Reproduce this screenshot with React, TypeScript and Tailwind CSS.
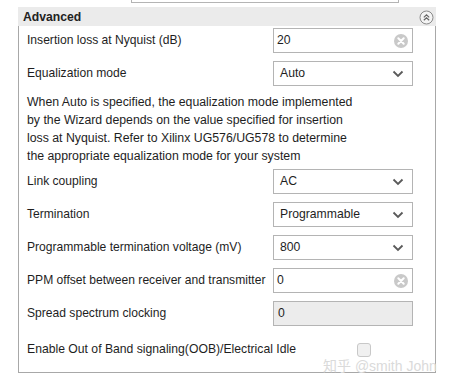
import React from "react";

const font = { fontFamily: '"Liberation Sans", Arial, sans-serif' };

function ClearIcon() {
  return (
    <svg width="14" height="14" viewBox="0 0 14 14" className="shrink-0">
      <circle cx="7" cy="7" r="7" fill="#c9c9c9" />
      <path d="M4.3 4.3 L9.7 9.7 M9.7 4.3 L4.3 9.7" stroke="#fff" strokeWidth="2" strokeLinecap="round" />
    </svg>
  );
}

function Chevron() {
  return (
    <svg width="12" height="8" viewBox="0 0 12 8" className="shrink-0">
      <path d="M1.5 1.5 L6 6 L10.5 1.5" fill="none" stroke="#5a5a5a" strokeWidth="1.8" />
    </svg>
  );
}

function CollapseIcon() {
  return (
    <svg width="15" height="15" viewBox="0 0 15 15">
      <circle cx="7.5" cy="7.5" r="6.5" fill="#f4f4f4" stroke="#8a8a8a" strokeWidth="1" />
      <path d="M4.8 7.4 L7.5 4.9 L10.2 7.4 M4.8 10.2 L7.5 7.7 L10.2 10.2" fill="none" stroke="#666" strokeWidth="1.2" />
    </svg>
  );
}

function Row({ label, children }: { label: string; children: React.ReactNode }) {
  return (
    <div className="flex h-[25px] items-center">
      <div className="w-[254px] whitespace-nowrap pl-[8px] text-[12.1px] text-[#1e1e1e]">{label}</div>
      {children}
    </div>
  );
}

function TextInput({ value }: { value: string }) {
  return (
    <div className="flex h-[25px] w-[140px] items-center justify-between border border-[#b4b4b4] bg-white pl-[3px] pr-[4px] text-[12.2px] text-[#1e1e1e]">
      <span>{value}</span>
      <ClearIcon />
    </div>
  );
}

function Select({ value }: { value: string }) {
  return (
    <div className="flex h-[25px] w-[140px] items-center justify-between border border-[#b4b4b4] bg-white pl-[6px] pr-[8px] text-[12.2px] text-[#1e1e1e]">
      <span>{value}</span>
      <Chevron />
    </div>
  );
}

export default function App() {
  return (
    <div className="relative h-[387px] w-[449px] overflow-hidden bg-white" style={font}>
      <div className="ml-[131px] h-[3px] w-[268px] border-x border-b border-[#b4b4b4]" />
      <div className="ml-[18px] mt-[4px] w-[418px]">
        <div className="flex h-[19px] items-center justify-between bg-[#ebebeb] pl-[5px] pr-[2px] pt-[1px]">
          <span className="text-[12.2px] font-bold text-[#222]">Advanced</span>
          <CollapseIcon />
        </div>
        <div className="flex flex-col border-x border-b border-[#a8a8a8] pb-[10px] pt-[2px]">
          <Row label="Insertion loss at Nyquist (dB)">
            <TextInput value="20" />
          </Row>
          <div className="mt-[8px]">
            <Row label="Equalization mode">
              <Select value="Auto" />
            </Row>
          </div>
          <p className="mb-[4px] mt-[7px] pl-[8px] text-[12.3px] leading-[18px] text-[#1e1e1e]">
            When Auto is specified, the equalization mode implemented
            <br />
            by the Wizard depends on the value specified for insertion
            <br />
            loss at Nyquist. Refer to Xilinx UG576/UG578 to determine
            <br />
            the appropriate equalization mode for your system
          </p>
          <div className="flex flex-col gap-[8px]">
            <Row label="Link coupling">
              <Select value="AC" />
            </Row>
            <Row label="Termination">
              <Select value="Programmable" />
            </Row>
            <Row label="Programmable termination voltage (mV)">
              <Select value="800" />
            </Row>
            <Row label="PPM offset between receiver and transmitter">
              <TextInput value="0" />
            </Row>
            <Row label="Spread spectrum clocking">
              <div className="flex h-[25px] w-[140px] items-center border border-[#b4b4b4] bg-[#ececec] pl-[4px] text-[12.2px] text-[#1e1e1e]">
                0
              </div>
            </Row>
          </div>
          <div className="mt-[11px] flex h-[25px] items-center">
            <div className="w-[338px] whitespace-nowrap pl-[8px] text-[12.2px] text-[#1e1e1e]">
              Enable Out of Band signaling(OOB)/Electrical Idle
            </div>
            <div className="h-[14px] w-[14px] rounded-[3px] border border-[#c8c8c8] bg-[#f0f0f0]" />
          </div>
        </div>
      </div>
      <div
        className="absolute left-[323px] top-[356px] text-[14px] leading-[20px] text-[#dadada]"
        style={{ fontFamily: '"Liberation Sans", "Noto Sans CJK SC", sans-serif' }}
      >
        知乎 @smith John
      </div>
    </div>
  );
}
